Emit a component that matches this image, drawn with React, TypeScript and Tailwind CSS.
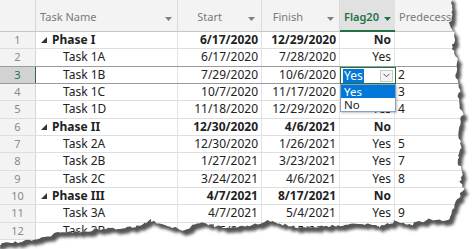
import React from "react";

type Row = { n: number; name: string; start: string; finish: string; flag: string; pred: string; phase?: boolean };

const rows: Row[] = [
  { n: 1, name: "Phase I", start: "6/17/2020", finish: "12/29/2020", flag: "No", pred: "", phase: true },
  { n: 2, name: "Task 1A", start: "6/17/2020", finish: "7/28/2020", flag: "Yes", pred: "" },
  { n: 3, name: "Task 1B", start: "7/29/2020", finish: "10/6/2020", flag: "", pred: "2" },
  { n: 4, name: "Task 1C", start: "10/7/2020", finish: "11/17/2020", flag: "", pred: "3" },
  { n: 5, name: "Task 1D", start: "11/18/2020", finish: "12/29/2020", flag: "Yes", pred: "4" },
  { n: 6, name: "Phase II", start: "12/30/2020", finish: "4/6/2021", flag: "No", pred: "", phase: true },
  { n: 7, name: "Task 2A", start: "12/30/2020", finish: "1/26/2021", flag: "Yes", pred: "5" },
  { n: 8, name: "Task 2B", start: "1/27/2021", finish: "3/23/2021", flag: "Yes", pred: "7" },
  { n: 9, name: "Task 2C", start: "3/24/2021", finish: "4/6/2021", flag: "Yes", pred: "8" },
  { n: 10, name: "Phase III", start: "4/7/2021", finish: "8/17/2021", flag: "No", pred: "", phase: true },
  { n: 11, name: "Task 3A", start: "4/7/2021", finish: "5/4/2021", flag: "Yes", pred: "9" },
  { n: 12, name: "Task 3B", start: "5/5/2021", finish: "6/15/2021", flag: "Yes", pred: "4" },
];

const Arrow = ({ green }: { green?: boolean }) => (
  <svg width="7" height="4" viewBox="0 0 7 4" className="shrink-0">
    <path d="M0 0 L7 0 L3.5 4 Z" fill={green ? "#217346" : "#808080"} />
  </svg>
);

const Collapse = () => (
  <svg width="6" height="6" viewBox="0 0 6 6" className="shrink-0">
    <path d="M6 0 L6 6 L0 6 Z" fill="#333" />
  </svg>
);

function rng(seed: number) {
  let s = seed;
  return () => {
    s = (s * 16807) % 2147483647;
    return (s - 1) / 2147483646;
  };
}

function tornPath(): string {
  const right: [number, number][] = [
    [451, -5], [452, 15], [449, 25], [455, 35], [452, 50], [458, 60], [455, 75], [460, 90], [458, 100],
    [463, 115], [458, 130], [462, 145], [458, 160], [462, 175], [460, 182], [464, 189], [456, 200], [452, 212], [448, 221],
  ];
  const bottom: [number, number][] = [
    [430, 219], [410, 225], [395, 221], [380, 227], [360, 223], [330, 226], [300, 228], [280, 224], [267, 221],
    [250, 226], [230, 228], [215, 226], [200, 223], [185, 230], [165, 226], [150, 220], [140, 226], [120, 228],
    [100, 229], [80, 232], [60, 232], [45, 238], [25, 241], [0, 244], [-5, 245],
  ];
  const ctrl = [...right, ...bottom];
  const r = rng(7);
  const pts: [number, number][] = [];
  for (let i = 0; i < ctrl.length - 1; i++) {
    const [x0, y0] = ctrl[i];
    const [x1, y1] = ctrl[i + 1];
    const d = Math.hypot(x1 - x0, y1 - y0);
    const steps = Math.max(1, Math.round(d / 2.5));
    for (let k = 0; k < steps; k++) {
      const t = k / steps;
      const jx = (r() - 0.5) * 2.6;
      const jy = (r() - 0.5) * 2.6;
      pts.push([x0 + (x1 - x0) * t + jx, y0 + (y1 - y0) * t + jy]);
    }
  }
  pts.push(ctrl[ctrl.length - 1]);
  return "M-5 -5 " + pts.map(([x, y]) => `L${x.toFixed(1)} ${y.toFixed(1)}`).join(" ") + " Z";
}

const paper = tornPath();

export default function App() {
  const font = { fontFamily: '"Segoe UI", "Noto Sans", "Open Sans", sans-serif' };
  return (
    <div className="relative w-[474px] h-[249px] overflow-hidden bg-white text-[12px] text-[#222]" style={font}>
      <div className="flex flex-col">
        {/* header */}
        <div className="grid grid-cols-[36px_142px_84px_78px_55px_1fr] h-[32px] bg-[#f3f3f3] border-b border-[#c6c6c6] text-[11px] text-[#7a7a7a]">
          <div className="border-r border-[#d6d6d6]" />
          <div className="flex items-end justify-between pl-[4px] pr-[5px] pb-[6px] border-r border-[#dadada]">
            <span>Task Name</span>
            <span className="mb-[4px]"><Arrow /></span>
          </div>
          <div className="flex items-end justify-end gap-[26px] pr-[6px] pb-[6px] border-r border-[#dadada]">
            <span>Start</span>
            <span className="mb-[4px]"><Arrow /></span>
          </div>
          <div className="flex items-end justify-end gap-[24px] pr-[5px] pb-[6px] border-r border-[#dadada]">
            <span>Finish</span>
            <span className="mb-[4px]"><Arrow /></span>
          </div>
          <div className="flex items-end justify-between pl-[4px] pr-[4px] pb-[5px] bg-[#e1e1e1] border-b-2 border-[#217346] -mb-px text-[#217346] font-semibold">
            <span>Flag20</span>
            <span className="mb-[4px]"><Arrow green /></span>
          </div>
          <div className="flex items-end pl-[4px] pb-[6px] whitespace-nowrap overflow-hidden">
            <span>Predecessors</span>
          </div>
        </div>
        {rows.map((r) => {
          const sel = r.n === 3;
          return (
            <div
              key={r.n}
              className={
                "grid grid-cols-[36px_142px_84px_78px_55px_1fr] h-[17.33px] leading-[16px] border-b " +
                (sel ? "border-[#9a9a9a]" : "border-[#dedede]") +
                (r.n === 2 ? " border-b-[#9a9a9a]" : "")
              }
            >
              <div
                className={
                  "flex items-center justify-center border-r text-[11px] " +
                  (sel ? "bg-[#d2d2d2] text-[#217346] border-[#217346]" : "bg-[#f3f3f3] text-[#8a8a8a] border-[#d6d6d6]")
                }
              >
                {r.n}
              </div>
              <div className={"flex items-center border-r border-[#e3e3e3] " + (r.phase ? "font-bold pl-[5px] gap-[5px]" : "pl-[27px]")}>
                {r.phase && <Collapse />}
                <span>{r.name}</span>
              </div>
              <div className={"flex items-center justify-end pr-[3px] border-r border-[#e3e3e3] " + (r.phase ? "font-bold" : "")}>
                {r.start}
              </div>
              <div className={"flex items-center justify-end pr-[3px] border-r border-[#e3e3e3] " + (r.phase ? "font-bold" : "")}>
                {r.finish}
              </div>
              <div className={"flex items-center justify-end pr-[3px] border-r border-[#e3e3e3] " + (r.phase ? "font-bold" : "")}>
                {r.flag}
              </div>
              <div className="flex items-center pl-[3px]">{r.pred}</div>
            </div>
          );
        })}
      </div>

      {/* cell editor + dropdown */}
      <div className="absolute left-[340px] top-[67px] w-[56px] h-[17px] border border-[#217346] bg-white flex items-center pl-[2px]">
        <span className="bg-[#0078d7] text-white leading-[14px] px-[1px]">Yes</span>
        <div className="ml-auto mr-[2px] w-[13px] h-[12px] border border-[#c8c8c8] bg-[#f5f5f5] flex items-center justify-center">
          <svg width="7" height="5" viewBox="0 0 7 5">
            <path d="M0.5 0.8 L3.5 3.8 L6.5 0.8" stroke="#555" strokeWidth="1" fill="none" />
          </svg>
        </div>
      </div>
      <div className="absolute left-[340px] top-[84px] w-[56px] border border-[#8aa0c0] bg-white flex flex-col text-[11.5px] shadow-[1px_1px_2px_rgba(0,0,0,0.25)]">
        <div className="bg-[#0078d7] text-white pl-[3px] h-[13px] leading-[13px]">Yes</div>
        <div className="pl-[3px] h-[13px] leading-[13px]">No</div>
      </div>

      {/* torn paper edge */}
      <svg className="absolute inset-0 pointer-events-none" width="474" height="249" viewBox="0 0 474 249">
        <defs>
          <filter id="blur" x="-10%" y="-10%" width="120%" height="120%">
            <feGaussianBlur stdDeviation="1.8" />
          </filter>
          <clipPath id="outside">
            <path d={"M-10 -10 H484 V259 H-10 Z " + paper} clipRule="evenodd" />
          </clipPath>
        </defs>
        <path d={"M-10 -10 H484 V259 H-10 Z " + paper} fill="#ffffff" fillRule="evenodd" />
        <g clipPath="url(#outside)">
          <path d={paper} transform="translate(4 5)" fill="#555555" filter="url(#blur)" />
        </g>
      </svg>
    </div>
  );
}
